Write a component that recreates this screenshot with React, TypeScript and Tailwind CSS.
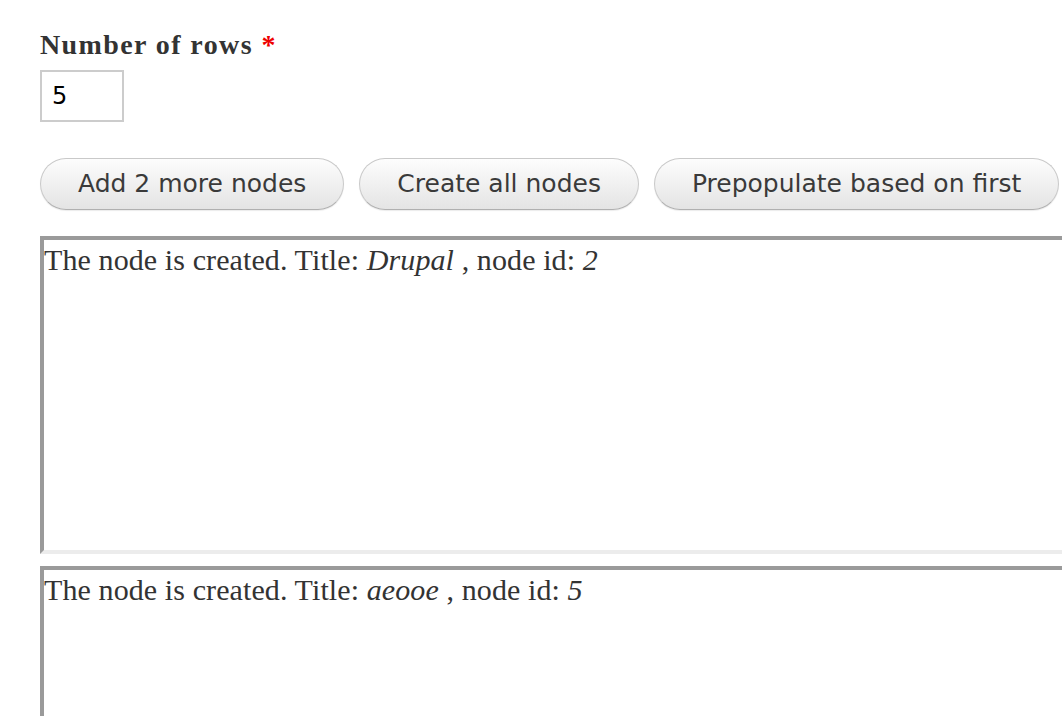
import React from "react";

const nodes = [
  { title: "Drupal", id: "2" },
  { title: "aeooe", id: "5" },
];

const buttons = ["Add 2 more nodes", "Create all nodes", "Prepopulate based on first"];

export default function App() {
  return (
    <div className="w-[1062px] h-[716px] overflow-hidden bg-white pl-[40px] pt-[27px]">
      {/* Rows field */}
      <label className="block font-['Liberation_Serif',serif] font-bold text-[28px] leading-[36px] tracking-[1.4px] text-[#333]">
        Number of rows <span className="text-[#e00]">*</span>
      </label>
      <div className="mt-[7px] w-[84px] h-[52px] border-2 border-[#ccc] flex items-center pl-[10px] font-['DejaVu_Sans',sans-serif] text-[24px] text-black">
        5
      </div>

      {/* Actions */}
      <div className="mt-[36px] flex gap-[15px]">
        {buttons.map((b) => (
          <button
            key={b}
            className="h-[52px] px-[37px] rounded-full border border-[#c9c9c9] border-b-[#b0b0b0] bg-gradient-to-b from-[#fdfdfd] to-[#e4e4e4] shadow-[0_1px_1px_rgba(0,0,0,0.08)] font-['DejaVu_Sans',sans-serif] text-[25px] text-[#3a3a3a] whitespace-nowrap"
          >
            {b}
          </button>
        ))}
      </div>

      {/* Results */}
      <div className="mt-[26px] flex flex-col gap-[12px]">
        {nodes.map((n) => (
          <div
            key={n.id}
            className="w-[1100px] h-[318px] shrink-0 border-[4px] border-t-[#9a9a9a] border-l-[#9a9a9a] border-b-[#ececec] border-r-[#ececec] font-['Liberation_Serif',serif] text-[30px] leading-[40px] tracking-[0.1px] text-[#333]"
          >
            The node is created. Title: <em>{n.title}</em> , node id: <em>{n.id}</em>
          </div>
        ))}
      </div>
    </div>
  );
}
